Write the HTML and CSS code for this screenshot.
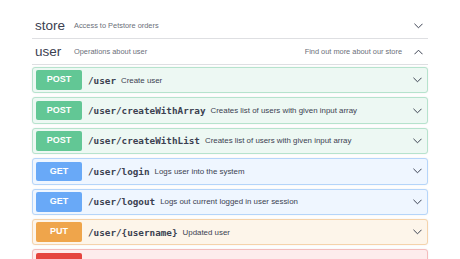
FILE: index.html
```html
<!DOCTYPE html>
<html lang="en">
<head>
<meta charset="UTF-8">
<title>Swagger Petstore</title>
<link rel="stylesheet" href="styles.css">
</head>
<body>

<div class="container">
	<div class="tag">
		<h3 class="tag-title">store</h3>
		<span class="tag-desc">Access to Petstore orders</span>
		<span class="spacer"></span>
		<svg class="arrow" viewBox="0 0 10 6"><polyline points="0.5,0.5 5,5 9.5,0.5"/></svg>
	</div>

	<div class="tag">
		<h3 class="tag-title">user</h3>
		<span class="tag-desc">Operations about user</span>
		<span class="spacer"></span>
		<span class="tag-link">Find out more about our store</span>
		<svg class="arrow" viewBox="0 0 10 6"><polyline points="0.5,5.5 5,1 9.5,5.5"/></svg>
	</div>

	<div class="ops">
		<div class="op post">
			<span class="method">POST</span>
			<span class="path">/user</span>
			<span class="summary">Create user</span>
			<span class="spacer"></span>
			<svg class="arrow" viewBox="0 0 10 6"><polyline points="0.5,0.5 5,5 9.5,0.5"/></svg>
		</div>
		<div class="op post">
			<span class="method">POST</span>
			<span class="path">/user/createWithArray</span>
			<span class="summary">Creates list of users with given input array</span>
			<span class="spacer"></span>
			<svg class="arrow" viewBox="0 0 10 6"><polyline points="0.5,0.5 5,5 9.5,0.5"/></svg>
		</div>
		<div class="op post">
			<span class="method">POST</span>
			<span class="path">/user/createWithList</span>
			<span class="summary">Creates list of users with given input array</span>
			<span class="spacer"></span>
			<svg class="arrow" viewBox="0 0 10 6"><polyline points="0.5,0.5 5,5 9.5,0.5"/></svg>
		</div>
		<div class="op get">
			<span class="method">GET</span>
			<span class="path">/user/login</span>
			<span class="summary">Logs user into the system</span>
			<span class="spacer"></span>
			<svg class="arrow" viewBox="0 0 10 6"><polyline points="0.5,0.5 5,5 9.5,0.5"/></svg>
		</div>
		<div class="op get">
			<span class="method">GET</span>
			<span class="path">/user/logout</span>
			<span class="summary">Logs out current logged in user session</span>
			<span class="spacer"></span>
			<svg class="arrow" viewBox="0 0 10 6"><polyline points="0.5,0.5 5,5 9.5,0.5"/></svg>
		</div>
		<div class="op put">
			<span class="method">PUT</span>
			<span class="path">/user/{username}</span>
			<span class="summary">Updated user</span>
			<span class="spacer"></span>
			<svg class="arrow" viewBox="0 0 10 6"><polyline points="0.5,0.5 5,5 9.5,0.5"/></svg>
		</div>
		<div class="op delete">
			<span class="method">DELETE</span>
			<span class="path">/user/{username}</span>
			<span class="summary">Delete user</span>
			<span class="spacer"></span>
			<svg class="arrow" viewBox="0 0 10 6"><polyline points="0.5,0.5 5,5 9.5,0.5"/></svg>
		</div>
	</div>
</div>

</body>
</html>
```

FILE: styles.css
```css
* {
	box-sizing: border-box;
	margin: 0;
	padding: 0;
}
html, body {
	background: #fff;
	color: #3b4151;
	overflow: hidden;
}
body {
	font-family: "Liberation Sans", Arial, sans-serif;
}
.container {
	width: 396px;
	margin: 0 auto;
	padding-top: 13px;
}
.spacer {
	flex: 1;
}
.arrow {
	width: 9px;
	height: 6px;
	flex: none;
	fill: none;
	stroke: #3b4151;
	stroke-width: 1.1;
}

/* tag headers */
.tag {
	display: flex;
	align-items: center;
	height: 26px;
	padding: 0 5px 0 3px;
	border-bottom: 1px solid #dedfe2;
}
.tag-title {
	font-size: 13.5px;
	font-weight: normal;
	width: 39px;
}
.tag-desc, .tag-link {
	font-size: 7.4px;
	color: #6b6f79;
}
.tag-link {
	margin-right: 12px;
}

/* operations */
.ops {
	padding-top: 2px;
}
.op {
	display: flex;
	align-items: center;
	height: 26.4px;
	margin-bottom: 4px;
	padding: 0 5px 0 3px;
	border: 1px solid;
	border-radius: 3px;
	box-shadow: 0 0 2px rgba(0,0,0,0.08);
}
.method {
	width: 46px;
	height: 19.5px;
	line-height: 19.5px;
	border-radius: 2px;
	text-align: center;
	color: #fff;
	font-weight: bold;
	font-size: 9px;
	flex: none;
}
.path {
	font-family: "DejaVu Sans Mono", monospace;
	font-weight: bold;
	font-size: 9.3px;
	margin-left: 6px;
	margin-right: 5px;
}
.summary {
	font-size: 7.9px;
}

.post { background: #edf8f3; border-color: #b6e3cd; }
.post .method { background: #62c795; }
.get { background: #eff6ff; border-color: #b5d5fa; }
.get .method { background: #69a9f7; }
.put { background: #fdf5ea; border-color: #f5d3ab; }
.put .method { background: #efa54b; }
.delete { background: #fdecec; border-color: #f4bcbc; }
.delete .method { background: #e5453f; }
```
